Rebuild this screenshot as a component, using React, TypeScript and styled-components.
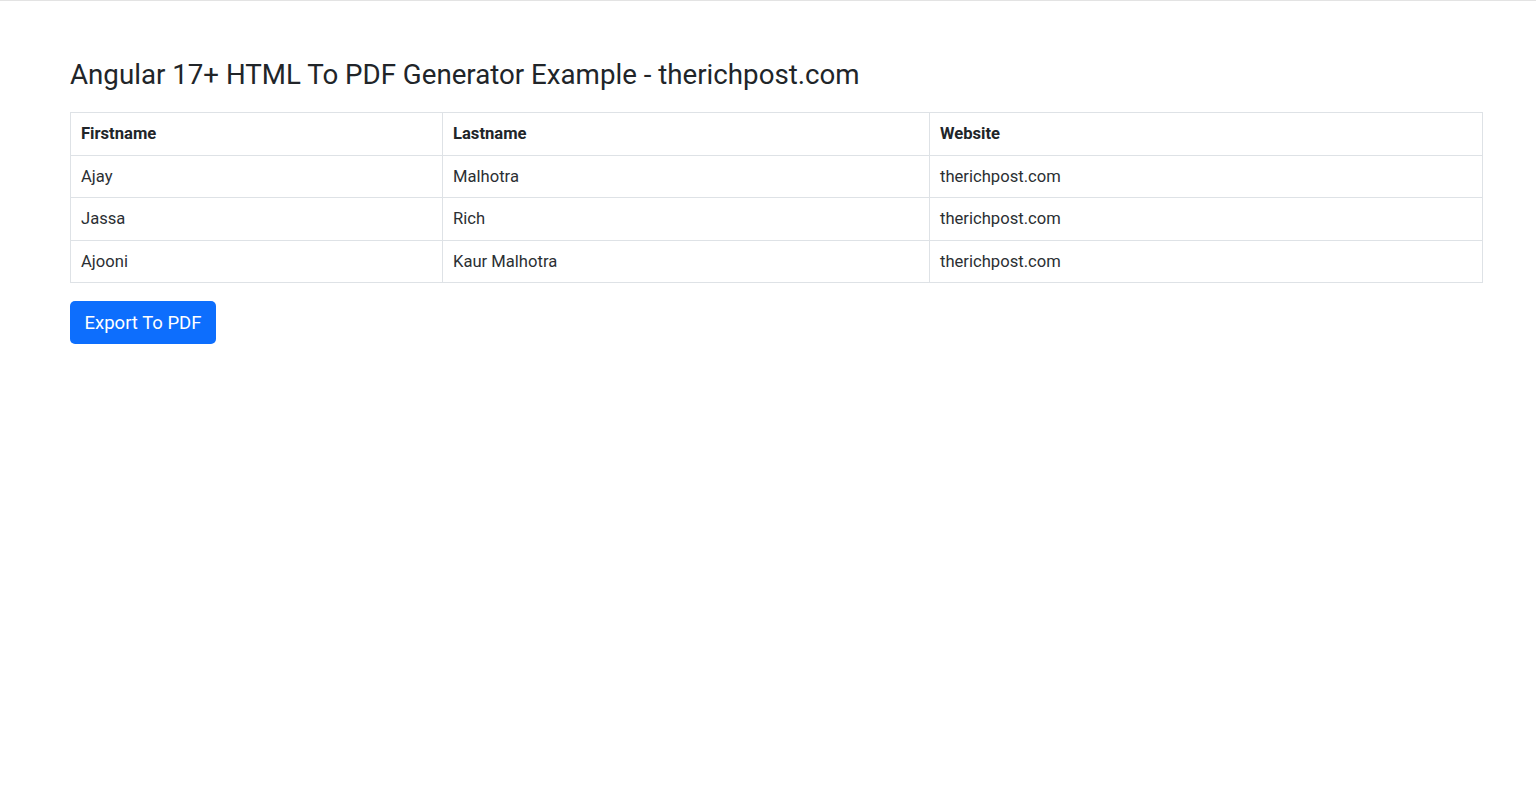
import React from 'react';
import styled, { createGlobalStyle } from 'styled-components';

//GLOBAL
const GlobalStyle = createGlobalStyle`
  html, body {
    margin: 0;
    padding: 0;
    background: #ffffff;
  }
  body {
    font-family: Roboto, "Liberation Sans", sans-serif;
    color: #212529;
    border-top: 1px solid #e3e3e3;
  }
`;

const rows = [
  { first: 'Ajay', last: 'Malhotra', site: 'therichpost.com' },
  { first: 'Jassa', last: 'Rich', site: 'therichpost.com' },
  { first: 'Ajooni', last: 'Kaur Malhotra', site: 'therichpost.com' },
];

function App() {
  const handleExport = () => {
    window.print();
  };

  return (
    <>
      <GlobalStyle />
      <StyledContainer>
        <StyledTitle>Angular 17+ HTML To PDF Generator Example - therichpost.com</StyledTitle>
        <StyledTable>
          <colgroup>
            <col style={{ width: 372 }} />
            <col style={{ width: 487 }} />
            <col />
          </colgroup>
          <thead>
            <tr>
              <th>Firstname</th>
              <th>Lastname</th>
              <th>Website</th>
            </tr>
          </thead>
          <tbody>
            {rows.map((row) => (
              <tr key={row.first}>
                <td>{row.first}</td>
                <td>{row.last}</td>
                <td>{row.site}</td>
              </tr>
            ))}
          </tbody>
        </StyledTable>
        <StyledButton onClick={() => handleExport()}>Export To PDF</StyledButton>
      </StyledContainer>
    </>
  );
}

const StyledContainer = styled.div`
  padding: 57px 53px 40px 70px;
  display: flex;
  flex-direction: column;
  align-items: flex-start;
`;

const StyledTitle = styled.h3`
  margin: 0 0 21px;
  font-size: 27.7px;
  font-weight: 400;
  line-height: 1.2;
  color: #212529;
`;

const StyledTable = styled.table`
  width: 100%;
  border-collapse: collapse;
  table-layout: fixed;
  font-size: 16.6px;
  th,
  td {
    border: 1px solid #dee2e6;
    height: 42.5px;
    box-sizing: border-box;
    padding: 1px 10px 0;
    text-align: left;
    vertical-align: middle;
    line-height: 24px;
    color: #2b2f33;
  }
  th {
    font-weight: 700;
    color: #212529;
  }
`;

const StyledButton = styled.button`
  margin-top: 18px;
  width: 146px;
  height: 43px;
  border: none;
  border-radius: 5px;
  background-color: #0d6efd;
  color: #ffffff;
  font-family: Roboto, "Liberation Sans", sans-serif;
  font-size: 18.5px;
  cursor: pointer;
`;

export default App;
